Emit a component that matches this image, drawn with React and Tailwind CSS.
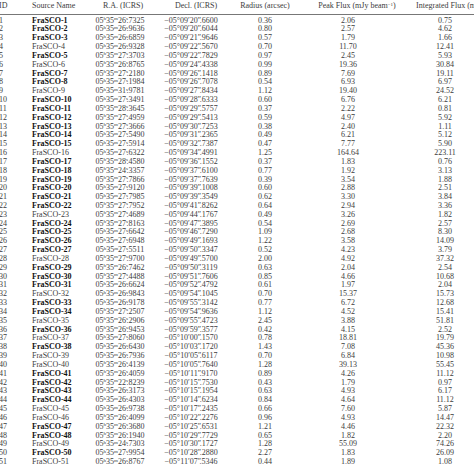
import React from "react";

const D = `1 1 26.7325 09 20.6600 0.36 2.06 0.75
2 1 26.9636 09 20.6044 0.80 2.57 4.62
3 1 26.6859 09 21.9646 0.57 1.79 1.66
4 0 26.9328 09 22.5670 0.70 11.70 12.41
5 1 27.3703 09 22.7829 0.97 2.45 5.93
6 0 26.8765 09 24.4338 0.99 19.36 30.84
7 1 27.2180 09 26.1418 0.89 7.69 19.11
8 1 27.1984 09 26.7078 0.54 6.93 6.97
9 0 31.9781 09 27.8434 1.12 19.40 24.52
10 1 27.3491 09 28.6333 0.60 6.76 6.21
11 1 28.3645 09 29.5757 0.37 2.22 0.81
12 1 27.4959 09 29.5413 0.59 4.97 5.92
13 1 27.3666 09 30.7253 0.38 2.40 1.11
14 1 27.5490 09 31.2365 0.49 6.21 5.12
15 1 27.5914 09 32.7387 0.47 7.77 5.90
16 0 27.6322 09 34.4991 1.25 164.64 223.11
17 1 28.4580 09 36.1552 0.37 1.83 0.76
18 1 24.3357 09 37.6100 0.77 1.92 3.13
19 1 27.7866 09 37.7639 0.39 3.54 1.88
20 1 27.9120 09 39.1008 0.60 2.88 2.51
21 1 27.7985 09 39.3549 0.62 3.30 3.84
22 1 27.7952 09 41.8262 0.64 2.94 3.36
23 0 27.4689 09 44.1767 0.49 3.26 1.82
24 1 27.8163 09 47.3895 0.54 2.69 2.57
25 1 27.6642 09 46.7290 1.09 2.68 8.30
26 1 27.6948 09 49.1693 1.22 3.58 14.09
27 1 27.5511 09 50.3347 0.52 4.23 3.79
28 0 27.9700 09 49.5700 2.00 4.92 37.32
29 1 26.7462 09 50.3119 0.63 2.04 2.54
30 1 27.4488 09 51.7606 0.85 4.66 10.68
31 1 26.6624 09 52.4792 0.61 1.97 2.04
32 0 26.9843 09 54.1045 0.70 15.37 15.73
33 1 26.9178 09 55.3142 0.77 6.72 12.68
34 1 27.2507 09 54.9636 1.12 4.52 15.41
35 0 26.2906 09 55.4723 2.45 3.88 51.81
36 1 26.9453 09 59.3577 0.42 4.15 2.52
37 0 27.8060 10 00.1570 0.78 18.81 19.79
38 1 26.6430 10 03.1720 1.43 7.08 45.36
39 0 26.7936 10 05.6117 0.70 6.84 10.98
40 0 26.4139 10 05.7640 1.28 39.13 55.45
41 1 26.4059 10 11.9170 0.89 4.26 11.12
42 1 22.8239 10 15.7530 0.43 1.79 0.97
43 1 26.3173 10 15.1954 0.63 4.93 6.17
44 1 26.4303 10 14.6234 0.84 4.64 11.12
45 0 26.9738 10 17.2435 0.66 7.60 5.87
46 0 26.4099 10 22.2276 0.96 4.93 14.47
47 1 26.3680 10 25.6531 1.21 4.46 22.32
48 1 26.1940 10 29.7729 0.65 1.82 2.20
49 0 24.7303 10 30.1727 1.28 55.09 74.26
50 1 27.9954 10 28.2880 2.27 1.83 26.09
51 0 26.8767 11 07.5346 0.44 1.89 1.08`;

const rows = D.split("\n").map((l) => l.trim().split(" "));

function Sup({ children }) {
  return (
    <span className="relative -top-[2.5px] text-[5px] leading-none">{children}</span>
  );
}

const grid =
  "grid grid-cols-[33px_57px_62px_80px_68px_98px_96px] items-center";

export default function App() {
  return (
    <div
      className="w-[474px] h-[471px] overflow-hidden bg-white text-[#3c3c3c] text-[8px]"
      style={{ fontFamily: '"Liberation Serif", "Times New Roman", serif' }}
    >
      <div className="-ml-[1px] w-[500px]">
        <div className={`${grid} h-[14px] leading-[12px] items-start`}>
          <div>ID</div>
          <div>Source Name</div>
          <div className="text-center pl-[6px]">R.A. (ICRS)</div>
          <div className="text-center pl-[10px]">Decl. (ICRS)</div>
          <div className="text-center">Radius (arcsec)</div>
          <div className="text-center pl-[18px]">
            Peak Flux (mJy beam<Sup>−1</Sup>)
          </div>
          <div className="text-center pl-[12px] whitespace-nowrap">Integrated Flux (mJy)</div>
        </div>
        <div className="h-px bg-[#777]" />
        <div className="pt-[1.6px]">
          {rows.map(([id, b, ras, dm, ds, rad, pk, it]) => {
            const [s1, s2] = ras.split(".");
            const [d1, d2] = ds.split(".");
            return (
              <div key={id} className={`${grid} h-[8.84px] leading-[8.84px]`}>
                <div>{id}</div>
                <div className={b === "1" ? "font-bold text-[#111]" : ""}>FraSCO-{id}</div>
                <div className="text-center whitespace-nowrap">
                  05<Sup>h</Sup>35<Sup>m</Sup>
                  {s1}
                  <Sup>s</Sup>
                  <span className="-ml-[1.5px]">.{s2}</span>
                </div>
                <div className="text-center whitespace-nowrap">
                  −05°{dm}′{d1}″<span className="-ml-[1.5px]">.{d2}</span>
                </div>
                <div className="text-center">{rad}</div>
                <div className="text-center">{pk}</div>
                <div className="text-center">{it}</div>
              </div>
            );
          })}
        </div>
      </div>
    </div>
  );
}
